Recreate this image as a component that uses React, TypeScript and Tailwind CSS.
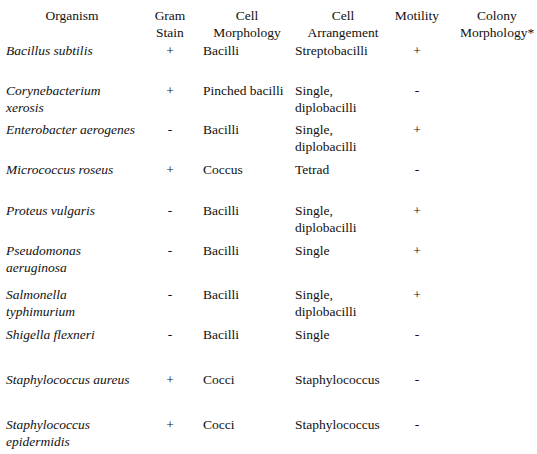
const rows = [
  { org: ['Bacillus subtilis'], gram: '+', cell: 'Bacilli', arr: ['Streptobacilli'], mot: '+', h: 'h-[40px]' },
  { org: ['Corynebacterium', 'xerosis'], gram: '+', cell: 'Pinched bacilli', arr: ['Single,', 'diplobacilli'], mot: '-', h: 'h-[39px]' },
  { org: ['Enterobacter aerogenes'], gram: '-', cell: 'Bacilli', arr: ['Single,', 'diplobacilli'], mot: '+', h: 'h-[40px]' },
  { org: ['Micrococcus roseus'], gram: '+', cell: 'Coccus', arr: ['Tetrad'], mot: '-', h: 'h-[41px]' },
  { org: ['Proteus vulgaris'], gram: '-', cell: 'Bacilli', arr: ['Single,', 'diplobacilli'], mot: '+', h: 'h-[40px]' },
  { org: ['Pseudomonas', 'aeruginosa'], gram: '-', cell: 'Bacilli', arr: ['Single'], mot: '+', h: 'h-[44px]' },
  { org: ['Salmonella', 'typhimurium'], gram: '-', cell: 'Bacilli', arr: ['Single,', 'diplobacilli'], mot: '+', h: 'h-[40px]' },
  { org: ['Shigella flexneri'], gram: '-', cell: 'Bacilli', arr: ['Single'], mot: '-', h: 'h-[45px]' },
  { org: ['Staphylococcus aureus'], gram: '+', cell: 'Cocci', arr: ['Staphylococcus'], mot: '-', h: 'h-[45px]' },
  { org: ['Staphylococcus', 'epidermidis'], gram: '+', cell: 'Cocci', arr: ['Staphylococcus'], mot: '-', h: 'h-[38px]' },
];

const cols = 'grid grid-cols-[144px_40px_104px_95px_56px_92px]';

export default function App() {
  return (
    <div className="w-[537px] h-[454px] overflow-hidden bg-white pl-[6px] pt-[7px] font-['Liberation_Serif'] text-[13.5px] leading-[17px] text-[#111]">
      {/* header */}
      <div className={`${cols} mb-[1px]`}>
        <div className="text-center pr-[12px]">Organism</div>
        <div className="text-center">
          <div>Gram</div>
          <div>Stain</div>
        </div>
        <div className="text-center pl-[10px]">
          <div>Cell</div>
          <div className="whitespace-nowrap">Morphology</div>
        </div>
        <div className="text-center pl-[3px]">
          <div>Cell</div>
          <div className="whitespace-nowrap">Arrangement</div>
        </div>
        <div className="text-center">Motility</div>
        <div className="text-center pl-[12px]">
          <div>Colony</div>
          <div className="whitespace-nowrap">Morphology*</div>
        </div>
      </div>

      {rows.map((r) => (
        <div key={r.org.join(' ')} className={`${cols} ${r.h}`}>
          <div className="italic">
            {r.org.map((l) => (
              <div key={l} className="whitespace-nowrap">{l}</div>
            ))}
          </div>
          <div className="text-center">{r.gram}</div>
          <div className="pl-[13px] whitespace-nowrap">{r.cell}</div>
          <div className="pl-[1px]">
            {r.arr.map((l) => (
              <div key={l} className="whitespace-nowrap">{l}</div>
            ))}
          </div>
          <div className="text-center">{r.mot}</div>
          <div />
        </div>
      ))}
    </div>
  );
}
